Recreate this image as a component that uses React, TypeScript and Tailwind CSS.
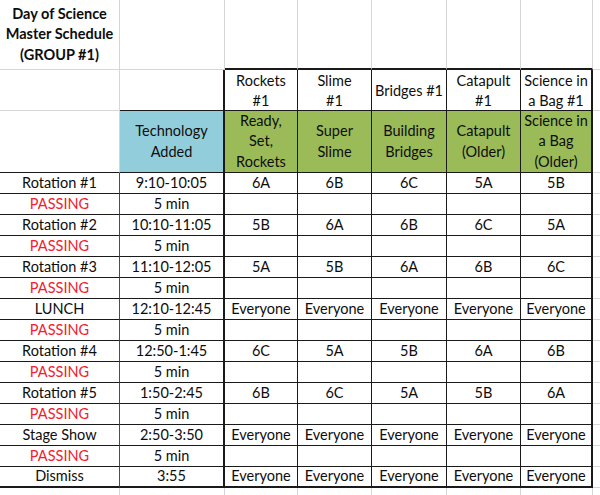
import React from 'react'

const font = { fontFamily: 'Lato, "Liberation Sans", sans-serif' }

// border helpers
const gr = 'border-r border-r-[#d6d6d6]'
const gb = 'border-b border-b-[#d6d6d6]'
const mr = 'border-r border-r-[#4d4d4d]'
const br = 'border-r border-r-[#1a1a1a]'
const br2 = 'border-r-2 border-r-[#1a1a1a]'
const bb = 'border-b border-b-[#1a1a1a]'
const bb2 = 'border-b-2 border-b-[#1a1a1a]'

const P = ['PASSING', '5 min']
const E = ['Everyone', 'Everyone', 'Everyone', 'Everyone', 'Everyone']

const rows: string[][] = [
  ['Rotation #1', '9:10-10:05', '6A', '6B', '6C', '5A', '5B'],
  P,
  ['Rotation #2', '10:10-11:05', '5B', '6A', '6B', '6C', '5A'],
  P,
  ['Rotation #3', '11:10-12:05', '5A', '5B', '6A', '6B', '6C'],
  P,
  ['LUNCH', '12:10-12:45', ...E],
  P,
  ['Rotation #4', '12:50-1:45', '6C', '5A', '5B', '6A', '6B'],
  P,
  ['Rotation #5', '1:50-2:45', '6B', '6C', '5A', '5B', '6A'],
  P,
  ['Stage Show', '2:50-3:50', ...E],
  P,
  ['Dismiss', '3:55', ...E],
]

const headers = [
  ['Rockets', '#1'],
  ['Slime', '#1'],
  ['Bridges #1'],
  ['Catapult', '#1'],
  ['Science in', 'a Bag #1'],
]

const activities = [
  ['Ready,', 'Set,', 'Rockets'],
  ['Super', 'Slime'],
  ['Building', 'Bridges'],
  ['Catapult', '(Older)'],
  ['Science in', 'a Bag', '(Older)'],
]

function Cell({ className = '', children }: { className?: string; children?: React.ReactNode }) {
  return (
    <div className={`flex flex-col items-center justify-center text-center leading-[20.5px] whitespace-nowrap overflow-hidden ${className}`}>
      {children}
    </div>
  )
}

function Lines({ lines }: { lines: string[] }) {
  return (
    <>
      {lines.map((l, i) => (
        <span key={i}>{l}</span>
      ))}
    </>
  )
}

export default function App() {
  return (
    <div className="w-[600px] h-[495px] overflow-hidden bg-white text-[#0d0d0d] text-[14.5px]" style={font}>
      <div className="grid grid-cols-[120px_105px_73px_74px_75px_74px_72px_7px] grid-rows-[70px_41px_62px_repeat(15,21px)_7px]">
        {/* title row */}
        <Cell className={`${gr} ${gb} font-bold`}>
          <span>Day of Science</span>
          <span>Master Schedule</span>
          <span>(GROUP #1)</span>
        </Cell>
        <Cell className={`${gr} ${gb}`} />
        {headers.map((_, i) => (
          <Cell key={i} className={`${gr} ${bb2}`} />
        ))}
        <Cell className={gb} />

        {/* event header row */}
        <Cell className={`${gr} ${gb}`} />
        <Cell className={`${br2} ${bb}`} />
        {headers.map((h, i) => (
          <Cell key={i} className={`${i === 4 ? br2 : br} ${bb} pt-[2px]`}>
            <Lines lines={h} />
          </Cell>
        ))}
        <Cell className={gb} />

        {/* activity row */}
        <Cell className={`${gr} ${bb}`} />
        <Cell className={`${br2} ${bb} bg-[#92cddc]`}>
          <span>Technology</span>
          <span>Added</span>
        </Cell>
        {activities.map((a, i) => (
          <Cell key={i} className={`${i === 4 ? br2 : br} ${bb} bg-[#9bbb59]`}>
            <Lines lines={a} />
          </Cell>
        ))}
        <Cell className={gb} />

        {/* schedule rows */}
        {rows.map((r, ri) => {
          const last = ri === rows.length - 1
          const b = last ? bb2 : bb
          const passing = r[0] === 'PASSING'
          return (
            <React.Fragment key={ri}>
              <Cell className={`${mr} ${b} ${passing ? 'text-[#f2212b]' : ''}`}>{r[0]}</Cell>
              <Cell className={`${br2} ${b}`}>{r[1]}</Cell>
              {[0, 1, 2, 3, 4].map((c) => (
                <Cell key={c} className={`${c === 4 ? br2 : br} ${b}`}>
                  {r[c + 2] ?? ''}
                </Cell>
              ))}
              <Cell className={gb} />
            </React.Fragment>
          )
        })}

        {/* trailing grid row */}
        <Cell className={gr} />
        <Cell className={gr} />
        <Cell className={gr} />
        <Cell className={gr} />
        <Cell className={gr} />
        <Cell className={gr} />
        <Cell className={gr} />
        <Cell />
      </div>
    </div>
  )
}
